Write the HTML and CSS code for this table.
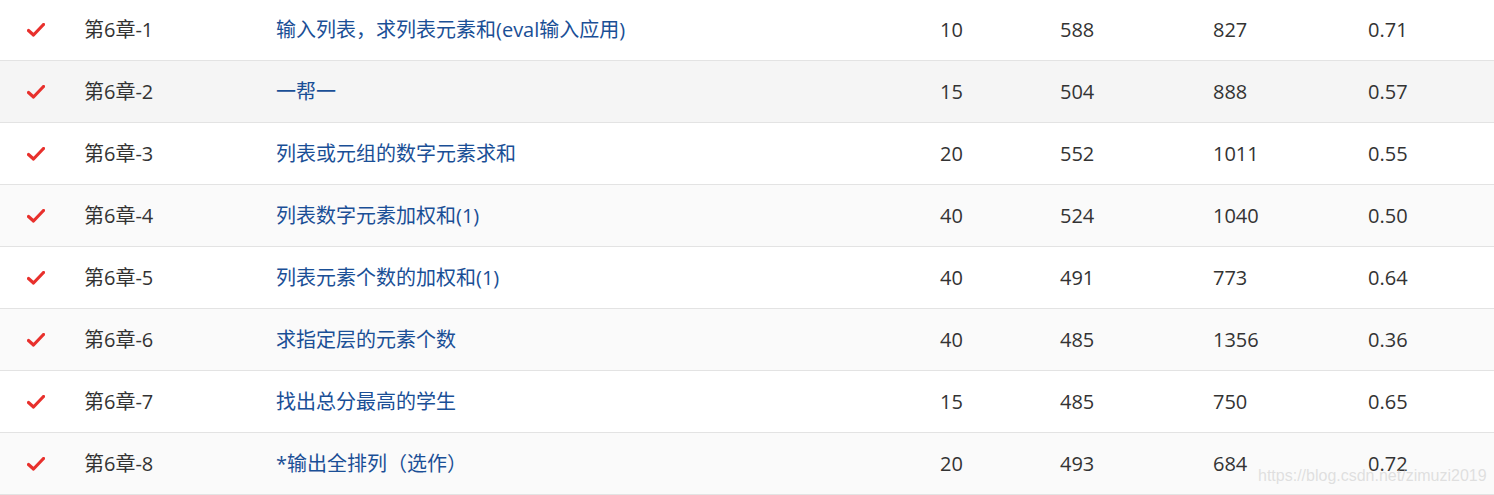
FILE: index.html
```html
<!DOCTYPE html>
<html lang="zh-CN">
<head>
<meta charset="utf-8">
<title>第6章</title>
<link rel="stylesheet" href="styles.css">
</head>
<body>
<div class="page">
  <div class="table">
    <div class="row">
      <div class="cell check"><svg viewBox="0 0 18 14" width="18" height="14"><path d="M1.5 7.5 L6.5 12 L16.5 1.5" fill="none" stroke="#e8302c" stroke-width="3.2" stroke-linecap="round" stroke-linejoin="round"/></svg></div>
      <div class="cell chap">第6章-1</div>
      <div class="cell title"><a href="#">输入列表，求列表元素和(eval输入应用)</a></div>
      <div class="cell">10</div><div class="cell">588</div><div class="cell">827</div><div class="cell">0.71</div>
    </div>
    <div class="row alt hover">
      <div class="cell check"><svg viewBox="0 0 18 14" width="18" height="14"><path d="M1.5 7.5 L6.5 12 L16.5 1.5" fill="none" stroke="#e8302c" stroke-width="3.2" stroke-linecap="round" stroke-linejoin="round"/></svg></div>
      <div class="cell chap">第6章-2</div>
      <div class="cell title"><a href="#">一帮一</a></div>
      <div class="cell">15</div><div class="cell">504</div><div class="cell">888</div><div class="cell">0.57</div>
    </div>
    <div class="row">
      <div class="cell check"><svg viewBox="0 0 18 14" width="18" height="14"><path d="M1.5 7.5 L6.5 12 L16.5 1.5" fill="none" stroke="#e8302c" stroke-width="3.2" stroke-linecap="round" stroke-linejoin="round"/></svg></div>
      <div class="cell chap">第6章-3</div>
      <div class="cell title"><a href="#">列表或元组的数字元素求和</a></div>
      <div class="cell">20</div><div class="cell">552</div><div class="cell">1011</div><div class="cell">0.55</div>
    </div>
    <div class="row alt">
      <div class="cell check"><svg viewBox="0 0 18 14" width="18" height="14"><path d="M1.5 7.5 L6.5 12 L16.5 1.5" fill="none" stroke="#e8302c" stroke-width="3.2" stroke-linecap="round" stroke-linejoin="round"/></svg></div>
      <div class="cell chap">第6章-4</div>
      <div class="cell title"><a href="#">列表数字元素加权和(1)</a></div>
      <div class="cell">40</div><div class="cell">524</div><div class="cell">1040</div><div class="cell">0.50</div>
    </div>
    <div class="row">
      <div class="cell check"><svg viewBox="0 0 18 14" width="18" height="14"><path d="M1.5 7.5 L6.5 12 L16.5 1.5" fill="none" stroke="#e8302c" stroke-width="3.2" stroke-linecap="round" stroke-linejoin="round"/></svg></div>
      <div class="cell chap">第6章-5</div>
      <div class="cell title"><a href="#">列表元素个数的加权和(1)</a></div>
      <div class="cell">40</div><div class="cell">491</div><div class="cell">773</div><div class="cell">0.64</div>
    </div>
    <div class="row alt">
      <div class="cell check"><svg viewBox="0 0 18 14" width="18" height="14"><path d="M1.5 7.5 L6.5 12 L16.5 1.5" fill="none" stroke="#e8302c" stroke-width="3.2" stroke-linecap="round" stroke-linejoin="round"/></svg></div>
      <div class="cell chap">第6章-6</div>
      <div class="cell title"><a href="#">求指定层的元素个数</a></div>
      <div class="cell">40</div><div class="cell">485</div><div class="cell">1356</div><div class="cell">0.36</div>
    </div>
    <div class="row">
      <div class="cell check"><svg viewBox="0 0 18 14" width="18" height="14"><path d="M1.5 7.5 L6.5 12 L16.5 1.5" fill="none" stroke="#e8302c" stroke-width="3.2" stroke-linecap="round" stroke-linejoin="round"/></svg></div>
      <div class="cell chap">第6章-7</div>
      <div class="cell title"><a href="#">找出总分最高的学生</a></div>
      <div class="cell">15</div><div class="cell">485</div><div class="cell">750</div><div class="cell">0.65</div>
    </div>
    <div class="row alt">
      <div class="cell check"><svg viewBox="0 0 18 14" width="18" height="14"><path d="M1.5 7.5 L6.5 12 L16.5 1.5" fill="none" stroke="#e8302c" stroke-width="3.2" stroke-linecap="round" stroke-linejoin="round"/></svg></div>
      <div class="cell chap">第6章-8</div>
      <div class="cell title"><a href="#">*输出全排列（选作）</a></div>
      <div class="cell">20</div><div class="cell">493</div><div class="cell">684</div><div class="cell">0.72</div>
    </div>
  </div>
  <div class="watermark">https://blog.csdn.net/zimuzi2019</div>
</div>
</body>
</html>
```

FILE: styles.css
```css
html, body {
  margin: 0;
  padding: 0;
  background: #fff;
}
.page {
  position: relative;
  width: 1494px;
  height: 495px;
  overflow: hidden;
  font-family: "Open Sans", "Noto Sans CJK SC", sans-serif;
  font-size: 20px;
  color: #333;
}
.table {
  margin-top: -1px;
}
.row {
  display: grid;
  grid-template-columns: 84px 192px 664px 120px 153px 155px 1fr;
  height: 61px;
  align-items: center;
  border-bottom: 1px solid #e3e3e3;
  background: #fff;
}
.row.alt {
  background: #fafafa;
}
.row.hover {
  background: #f5f5f5;
}
.cell {
  white-space: nowrap;
  line-height: 26px;
}
.check {
  padding-left: 27px;
  display: flex;
  align-items: center;
}
.check svg {
  display: block;
}
.title a {
  color: #1a4f96;
  text-decoration: none;
}
.watermark {
  position: absolute;
  left: 1258px;
  top: 467px;
  font-family: "Liberation Sans", Arial, sans-serif;
  font-size: 16px;
  color: rgba(205, 205, 205, 0.6);
  white-space: nowrap;
  pointer-events: none;
}
```
